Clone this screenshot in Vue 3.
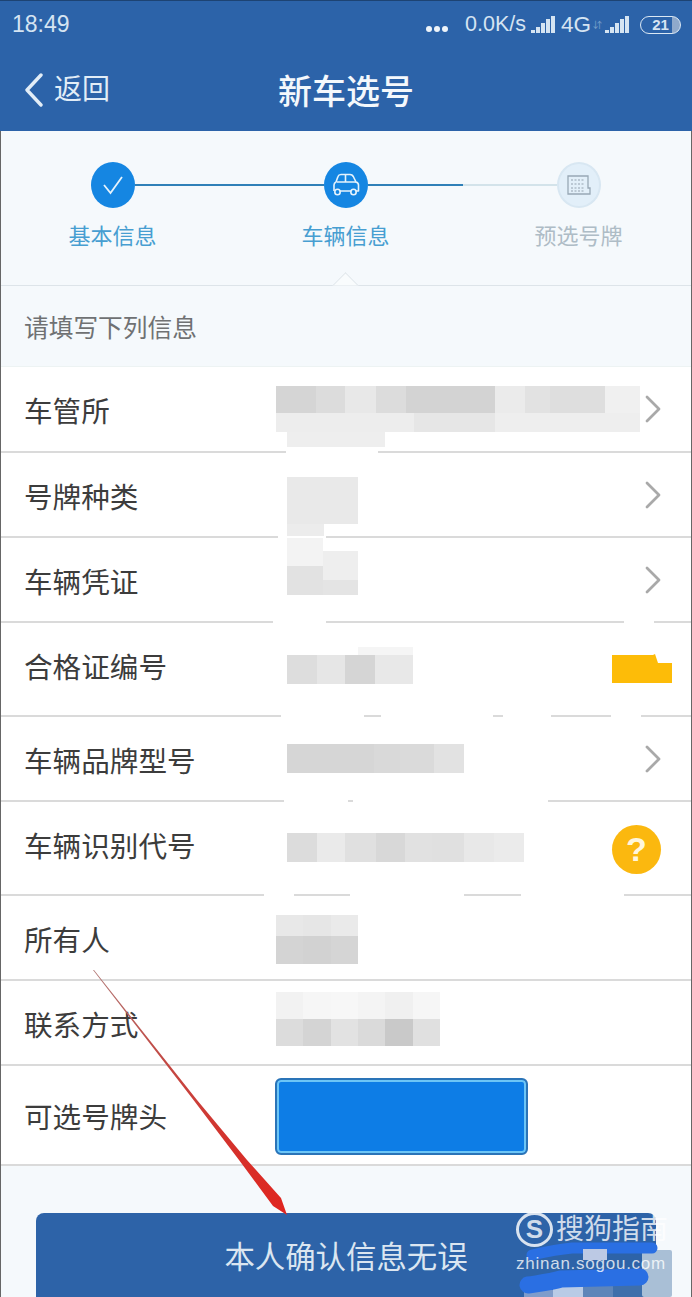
<template>
  <div class="page">
    <header class="top">
      <div class="status">
        <span class="time">18:49</span>
        <div class="status-right">
          <span class="dots"><i></i><i></i><i></i></span>
          <span class="speed">0.0K/s</span>
          <svg class="signal" width="26" height="20" viewBox="0 0 26 20" fill="currentColor">
            <rect x="0" y="15" width="4" height="3" /><rect x="5" y="12" width="4" height="6" />
            <rect x="10" y="8" width="4" height="10" /><rect x="15" y="4" width="4" height="14" />
            <rect x="20" y="1" width="4" height="17" />
          </svg>
          <span class="net">4G</span>
          <span class="net-sub">⇵</span>
          <svg class="signal" width="26" height="20" viewBox="0 0 26 20" fill="currentColor">
            <rect x="0" y="15" width="4" height="3" /><rect x="5" y="12" width="4" height="6" />
            <rect x="10" y="8" width="4" height="10" /><rect x="15" y="4" width="4" height="14" />
            <rect x="20" y="1" width="4" height="17" />
          </svg>
          <span class="battery">21</span>
        </div>
      </div>
      <nav class="nav">
        <div class="back">
          <svg width="22" height="34" viewBox="0 0 22 34" fill="none" stroke="currentColor" stroke-width="3.4" stroke-linecap="round" stroke-linejoin="round">
            <path d="M18 2 4 17l14 15" />
          </svg>
          <span>返回</span>
        </div>
        <h1>新车选号</h1>
      </nav>
    </header>

    <div class="frame">
      <section class="steps">
        <div class="track">
          <span class="dot on">
            <svg width="24" height="24" viewBox="0 0 24 24" fill="none" stroke="#e6f3fc" stroke-width="1.8">
              <path d="m3 12 6.5 8L21 4" />
            </svg>
          </span>
          <span class="line done"></span>
          <span class="dot on">
            <svg width="30" height="26" viewBox="0 0 30 26" fill="none" stroke="#e6f3fc" stroke-width="1.6" stroke-linejoin="round">
              <path d="M3 19v-6c0-1.500.8-2.500 2-3l2-5.500C7.500 3 8.500 2.500 10 2.500h9c1.500 0 2.500.5 3.300 2L25 10c1.500.5 2.500 1.500 2.500 3v6h-3" />
              <path d="M8.500 19h12M6 10h19M14.500 3v7" />
              <circle cx="6.500" cy="20" r="2.700" />
              <circle cx="22.500" cy="20" r="2.700" />
            </svg>
          </span>
          <span class="line half"></span>
          <span class="dot off">
            <svg width="24" height="20" viewBox="0 0 24 20" fill="none" stroke="#98a8b5" stroke-width="1.300">
              <path d="M1 1h20v12h2v6H1z" />
              <path d="M4 5h14M4 9h14M4 13h14M4 16h14" stroke-dasharray="2 1.500" stroke="#aebcc7" />
            </svg>
          </span>
        </div>
        <div class="step-labels">
          <span class="active">基本信息</span>
          <span class="active">车辆信息</span>
          <span>预选号牌</span>
        </div>
        <span class="notch"></span>
      </section>

      <div class="section-title">请填写下列信息</div>

      <ul class="form">
        <li v-for="row in rows" :key="row.label" class="row" :style="{ height: row.height + 'px' }">
          <span class="label" :class="{ lifted: row.height === 94 }">{{ row.label }}</span>
          <div class="value" :style="{ paddingTop: (row.maskTop || 0) + 'px' }">
            <div
              v-for="(strip, s) in row.mask"
              :key="s"
              class="strip"
              :style="{ height: strip.h + 'px', marginLeft: (strip.x || 0) + 'px' }"
            >
              <i v-for="(cell, c) in strip.cells" :key="c" :style="{ width: cell[0] + 'px', background: cell[1] }"></i>
            </div>
            <div v-if="row.plate" class="plate"></div>
          </div>
          <svg v-if="row.more" class="chev" width="16" height="28" viewBox="0 0 16 28" fill="none" stroke="#a9a9a9" stroke-width="2.800" stroke-linecap="round" stroke-linejoin="round">
            <path d="m2 2 12 12L2 26" />
          </svg>
          <svg v-if="row.flag" class="flag" width="60" height="30" viewBox="0 0 60 30">
            <path d="M0 1h41l2-1 3 9h14v20H0z" fill="#fdbc08" />
          </svg>
          <span v-if="row.help" class="help">?</span>
          <!-- smudged-out stretches of the divider -->
          <span
            v-for="(gap, g) in row.gaps"
            :key="g"
            class="smudge"
            :style="{ left: gap[0] + 'px', width: gap[1] + 'px' }"
          ></span>
        </li>
      </ul>

      <div class="actions">
        <button class="confirm">本人确认信息无误</button>
      </div>
    </div>

    <!-- hand-drawn arrow pointing at the button -->
    <svg class="arrow" width="692" height="1297" viewBox="0 0 692 1297">
      <defs>
        <linearGradient id="shaft" x1="93" y1="970" x2="287" y2="1215" gradientUnits="userSpaceOnUse">
          <stop offset="0" stop-color="#b27a78" />
          <stop offset="0.3" stop-color="#bf4f4a" />
          <stop offset="0.7" stop-color="#d4322c" />
          <stop offset="1" stop-color="#e0251f" />
        </linearGradient>
      </defs>
      <path d="M93 970 94 970 197 1100 247 1160 281 1198 287 1215 273 1206 239 1160 193.500 1100Z" fill="url(#shaft)" />
    </svg>

    <div class="stamp">
      <svg class="scrawl" width="176" height="100" viewBox="0 0 176 100" fill="none">
        <rect x="142" y="53" width="30" height="47" rx="2" fill="#a9bfd6" />
        <rect x="24" y="93" width="29" height="7" fill="#7f9ccb" />
        <rect x="53" y="88" width="30" height="12" fill="#b9cbe6" />
        <rect x="83" y="88" width="30" height="12" fill="#5e85b9" />
        <rect x="113" y="88" width="29" height="12" fill="#3f6fab" />
        <path d="M32 58c13-3 28-6 40-7l80 0" stroke="#2a6fe3" stroke-width="11" stroke-linecap="round" />
        <rect x="83" y="52" width="24" height="11" fill="#bcc9e4" />
        <path d="M28 88c13-2 23-3 33-6l79-2" stroke="#2a6fe3" stroke-width="17" stroke-linecap="round" />
      </svg>
      <div class="stamp-top">
        <span class="logo">S</span>
        <span class="brand">搜狗指南</span>
      </div>
      <div class="domain">zhinan.sogou.com</div>
    </div>
  </div>
</template>

<script setup>
const rows = [
  {
    label: '车管所', height: 86, more: true, maskTop: 19,
    mask: [
      { h: 27, cells: [[40, '#d5d5d5'], [29, '#dcdcdc'], [31, '#e8e8e8'], [30, '#dcdcdc'], [89, '#d3d3d3'], [30, '#ebebeb'], [25, '#e2e2e2'], [55, '#dedede'], [35, '#f0f0f0']] },
      { h: 19, cells: [[138, '#ededed'], [81, '#e6e6e6'], [145, '#eeeeee']] },
      { h: 15, x: 11, cells: [[98, '#eeeeee']] },
    ],
    gaps: [[285, 92]],
  },
  {
    label: '号牌种类', height: 85, more: true, maskTop: 24,
    mask: [
      { h: 47, x: 11, cells: [[71, '#e9e9e9']] },
      { h: 13, x: 11, cells: [[37, '#ececec']] },
    ],
    gaps: [[277, 48]],
  },
  {
    label: '车辆凭证', height: 85, more: true, maskTop: 0,
    mask: [
      { h: 13, x: 11, cells: [[36, '#f3f3f3']] },
      { h: 15, x: 11, cells: [[36, '#f3f3f3'], [35, '#eeeeee']] },
      { h: 14, x: 11, cells: [[36, '#e2e2e2'], [35, '#eeeeee']] },
      { h: 15, x: 11, cells: [[36, '#e2e2e2'], [35, '#e4e4e4']] },
    ],
    gaps: [[272, 53], [623, 30]],
  },
  {
    label: '合格证编号', height: 94, flag: true, maskTop: 24,
    mask: [
      { h: 8, x: 82, cells: [[55, '#f5f5f5']] },
      { h: 29, x: 11, cells: [[30, '#dddddd'], [28, '#e6e6e6'], [30, '#d5d5d5'], [38, '#e8e8e8']] },
    ],
    gaps: [[280, 83], [380, 112], [502, 48], [610, 30]],
  },
  {
    label: '车辆品牌型号', height: 85, more: true, maskTop: 27,
    mask: [
      { h: 29, x: 11, cells: [[87, '#d6d6d6'], [26, '#d9d9d9'], [34, '#dadada'], [30, '#e2e2e2']] },
    ],
    gaps: [[283, 64], [352, 195]],
  },
  {
    label: '车辆识别代号', height: 94, help: true, maskTop: 31,
    mask: [
      { h: 29, x: 11, cells: [[30, '#dcdcdc'], [28, '#eaeaea'], [31, '#e0e0e0'], [29, '#d8d8d8'], [27, '#e1e1e1'], [32, '#e0e0e0'], [30, '#e8e8e8'], [30, '#ebebeb']] },
    ],
    gaps: [[263, 30], [349, 114], [520, 103]],
  },
  {
    label: '所有人', height: 85, maskTop: 19,
    mask: [
      { h: 21, cells: [[27, '#e8e8e8'], [28, '#e6e6e6'], [27, '#eaeaea']] },
      { h: 28, cells: [[27, '#d4d4d4'], [28, '#d2d2d2'], [27, '#d5d5d5']] },
    ],
  },
  {
    label: '联系方式', height: 85, maskTop: 11,
    mask: [
      { h: 27, cells: [[27, '#f2f2f2'], [28, '#f6f6f6'], [27, '#f7f7f7'], [27, '#f4f4f4'], [28, '#f0f0f0'], [27, '#f6f6f6']] },
      { h: 27, cells: [[27, '#dcdcdc'], [28, '#d4d4d4'], [27, '#e2e2e2'], [27, '#dadada'], [28, '#c9c9c9'], [27, '#e0e0e0']] },
    ],
  },
  { label: '可选号牌头', height: 100, plate: true, maskTop: 12 },
]
</script>

<style>
html, body {
  margin: 0;
  background: #f5f9fc;
}
</style>

<style scoped>
.page {
  position: relative;
  width: 692px;
  height: 1297px;
  overflow: hidden;
  background: #f5f9fc;
  font-family: "Liberation Sans", "Noto Sans CJK SC", sans-serif;
}

.top {
  height: 131px;
  box-sizing: border-box;
  background: #2c63a9;
  border-top: 1px solid #1d4373;
  color: #fff;
}
.status {
  display: flex;
  align-items: center;
  justify-content: space-between;
  height: 47px;
  padding: 0 11px 0 12px;
  color: #d5e4f2;
}
.time {
  font-size: 23px;
}
.status-right {
  display: flex;
  align-items: center;
}
.dots {
  display: flex;
  gap: 2px;
  margin-right: 17px;
  padding-top: 8px;
}
.dots i {
  width: 6px;
  height: 6px;
  border-radius: 50%;
  background: #eef4fa;
}
.speed {
  font-size: 21.500px;
  margin-right: 5px;
}
.net {
  font-size: 22.500px;
  margin-left: 4px;
}
.net-sub {
  font-size: 9px;
  width: 14px;
  padding-left: 2px;
  box-sizing: border-box;
  opacity: 0.5;
}
.battery {
  width: 41px;
  height: 18px;
  box-sizing: border-box;
  margin-left: 9px;
  border: 1.500px solid #dbe8f4;
  border-radius: 9px;
  font-size: 15px;
  font-weight: 700;
  line-height: 15px;
  text-align: center;
  background: linear-gradient(90deg, transparent 80%, #8fa9cb 80%);
}

.nav {
  position: relative;
  display: flex;
  justify-content: center;
  align-items: center;
  height: 84px;
}
.back {
  position: absolute;
  left: 23px;
  top: 25px;
  display: flex;
  align-items: center;
  gap: 9px;
  color: #e2edf7;
  font-size: 28px;
  line-height: 34px;
}
.nav h1 {
  margin: 0 0 2px;
  font-size: 34px;
  font-weight: 500;
  color: #f4f8fc;
}

.frame {
  height: 1166px;
  border-left: 1px solid #666;
  border-right: 1px solid #666;
}

.steps {
  position: relative;
  height: 155px;
  box-sizing: border-box;
  padding-top: 31px;
  border-bottom: 1px solid #dde4e9;
}
.track {
  display: flex;
  align-items: center;
  padding-left: 90px;
}
.dot {
  display: flex;
  align-items: center;
  justify-content: center;
  flex: none;
  width: 44px;
  height: 46px;
  border-radius: 50%;
}
.dot.on {
  background: #1586e2;
}
.dot.off {
  box-sizing: border-box;
  background: #e2eff9;
  border: 2px solid #d8e7f2;
}
.line {
  flex: none;
  width: 189px;
  height: 2px;
}
.line.done {
  background: #2f80b8;
}
.line.half {
  background: linear-gradient(90deg, #2f80b8 50%, #d3e3ea 50%);
}
.step-labels {
  display: grid;
  grid-template-columns: repeat(3, 233px);
  margin: 12px 0 0 -5px;
  font-size: 22px;
  line-height: 34px;
  text-align: center;
  color: #aebcc6;
}
.step-labels .active {
  color: #479ed1;
}
.notch {
  position: absolute;
  left: 335px;
  bottom: -10px;
  width: 18px;
  height: 18px;
  background: #f9fcfd;
  border-top: 1px solid #dde4e9;
  border-left: 1px solid #dde4e9;
  transform: rotate(45deg);
  clip-path: polygon(0 0, 100% 0, 0 100%);
}

.section-title {
  height: 80px;
  box-sizing: border-box;
  padding: 24px 0 0 23px;
  font-size: 24.700px;
  line-height: 38px;
  color: #6f7173;
}

.form {
  margin: 0;
  padding: 0;
  list-style: none;
  background: #fff;
  border-top: 1px solid #edf3f3;
}
.row {
  position: relative;
  display: flex;
  align-items: center;
  box-sizing: border-box;
  padding: 0 30px 0 23px;
  border-bottom: 2px solid #dadada;
}
.label {
  flex: none;
  width: 252px;
  padding-top: 1px;
  font-size: 28.600px;
  color: #3c3c3c;
}
.label.lifted {
  padding: 0 0 8px;
}
.value {
  flex: 1;
  align-self: flex-start;
}
.strip {
  display: flex;
}
.strip i {
  display: block;
  flex: none;
  height: 100%;
}
.plate {
  width: 253px;
  height: 77px;
  margin-left: -1px;
  box-sizing: border-box;
  background: #0d7de6;
  border: 2px solid #2a74b8;
  border-radius: 6px;
  box-shadow: inset 0 0 0 2px #6cc5f6;
}
.chev {
  flex: none;
}
.flag {
  flex: none;
  margin: 0 -11px 0 0;
}
.help {
  flex: none;
  width: 49px;
  height: 49px;
  margin-top: 2px;
  border-radius: 50%;
  background: #fbb80f;
  color: #fff6dc;
  font-size: 34px;
  font-weight: 700;
  line-height: 49px;
  text-align: center;
}
.smudge {
  position: absolute;
  bottom: -2px;
  height: 2px;
  background: #fff;
}

.actions {
  padding: 47px 35px 0;
  overflow: hidden;
}
.confirm {
  display: block;
  width: 620px;
  height: 100px;
  padding: 0 0 18px;
  border: 0;
  border-radius: 8px;
  background: #2d63a8;
  color: #dbe6f1;
  font-family: inherit;
  font-size: 30.400px;
  line-height: 88px;
  text-align: center;
  vertical-align: top;
}

.arrow {
  position: absolute;
  left: 0;
  top: 0;
  pointer-events: none;
}

.stamp {
  position: absolute;
  left: 500px;
  top: 1197px;
  width: 192px;
  height: 100px;
  color: rgba(255, 255, 255, 0.78);
}
.scrawl {
  position: absolute;
  left: 0;
  top: 0;
}
.stamp-top {
  position: absolute;
  left: 16px;
  top: 15px;
  display: flex;
  align-items: center;
  gap: 3px;
}
.logo {
  width: 37px;
  height: 35px;
  box-sizing: border-box;
  border: 3px solid rgba(255, 255, 255, 0.82);
  border-radius: 50%;
  font-size: 26px;
  font-weight: 700;
  line-height: 29px;
  text-align: center;
}
.brand {
  font-size: 28px;
  line-height: 35px;
}
.domain {
  position: absolute;
  left: 16px;
  top: 56px;
  font-size: 17px;
  line-height: 22px;
  letter-spacing: 0.750px;
  white-space: nowrap;
}
</style>
